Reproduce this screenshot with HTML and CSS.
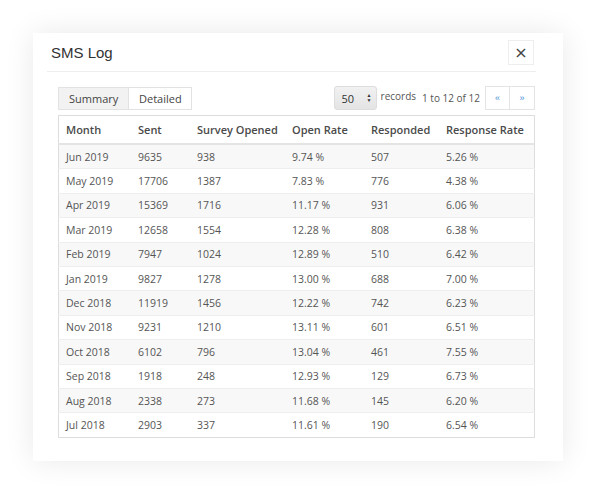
FILE: index.html
```html
<!DOCTYPE html>
<html lang="en">
<head>
    <meta charset="UTF-8">
    <title>SMS Log</title>
    <link rel="stylesheet" href="styles.css">
</head>
<body>
    <div class="modal">
        <div class="modal-header">
            <h3>SMS Log</h3>
            <button class="close">&times;</button>
        </div>
        <div class="modal-body">
            <div class="toolbar">
                <div class="tabs">
                    <button class="active">Summary</button>
                    <button>Detailed</button>
                </div>
                <div class="paging">
                    <div class="select">50 <span class="arrows">&#9650;<br>&#9660;</span></div>
                    <span class="records">records</span>
                    <span class="count">1 to 12 of 12</span>
                    <div class="pager">
                        <button>&laquo;</button>
                        <button>&raquo;</button>
                    </div>
                </div>
            </div>
            <table class="log">
                <thead>
                    <tr><th class="c1">Month</th><th class="c2">Sent</th><th class="c3">Survey Opened</th><th class="c4">Open Rate</th><th class="c5">Responded</th><th>Response Rate</th></tr>
                </thead>
                <tbody>
                    <tr><td>Jun 2019</td><td>9635</td><td>938</td><td>9.74 %</td><td>507</td><td>5.26 %</td></tr>
                    <tr><td>May 2019</td><td>17706</td><td>1387</td><td>7.83 %</td><td>776</td><td>4.38 %</td></tr>
                    <tr><td>Apr 2019</td><td>15369</td><td>1716</td><td>11.17 %</td><td>931</td><td>6.06 %</td></tr>
                    <tr><td>Mar 2019</td><td>12658</td><td>1554</td><td>12.28 %</td><td>808</td><td>6.38 %</td></tr>
                    <tr><td>Feb 2019</td><td>7947</td><td>1024</td><td>12.89 %</td><td>510</td><td>6.42 %</td></tr>
                    <tr><td>Jan 2019</td><td>9827</td><td>1278</td><td>13.00 %</td><td>688</td><td>7.00 %</td></tr>
                    <tr><td>Dec 2018</td><td>11919</td><td>1456</td><td>12.22 %</td><td>742</td><td>6.23 %</td></tr>
                    <tr><td>Nov 2018</td><td>9231</td><td>1210</td><td>13.11 %</td><td>601</td><td>6.51 %</td></tr>
                    <tr><td>Oct 2018</td><td>6102</td><td>796</td><td>13.04 %</td><td>461</td><td>7.55 %</td></tr>
                    <tr><td>Sep 2018</td><td>1918</td><td>248</td><td>12.93 %</td><td>129</td><td>6.73 %</td></tr>
                    <tr><td>Aug 2018</td><td>2338</td><td>273</td><td>11.68 %</td><td>145</td><td>6.20 %</td></tr>
                    <tr><td>Jul 2018</td><td>2903</td><td>337</td><td>11.61 %</td><td>190</td><td>6.54 %</td></tr>
                </tbody>
            </table>
        </div>
    </div>
</body>
</html>
```

FILE: styles.css
```css
body {
    margin: 0;
    background-color: #fff;
    font-family: "Open Sans", sans-serif;
    color: #555;
}
.modal {
    width: 530px;
    height: 428px;
    margin: 33px;
    background-color: #fff;
    box-shadow: 0 0 28px rgba(0,0,0,0.09);
}
.modal-header {
    display: flex;
    justify-content: space-between;
    align-items: center;
    height: 38px;
    margin: 0 27px 0 14px;
    padding: 0 2px 0 4px;
    border-bottom: 1px solid #eee;
}
.modal-header h3 {
    margin: 0;
    font-family: "Liberation Sans", Arial, sans-serif;
    font-weight: normal;
    font-size: 15px;
    color: #333;
}
.close {
    width: 26px;
    height: 25px;
    margin-top: 1px;
    padding: 0;
    background: #fff;
    border: 1px solid #eee;
    font-family: "DejaVu Sans", sans-serif;
    font-size: 16px;
    line-height: 20px;
    color: #444;
}
.modal-body {
    padding: 14px 28px 0 25px;
}
.toolbar {
    display: flex;
    justify-content: space-between;
    align-items: center;
    margin-bottom: 5px;
}
.tabs {
    display: flex;
    margin-top: 1px;
}
.tabs button {
    height: 23px;
    padding: 0 10px;
    background: #fff;
    border: 1px solid #e2e2e2;
    font-family: "Open Sans", sans-serif;
    font-size: 11px;
    color: #444;
}
.tabs button + button {
    border-left: none;
}
.tabs button.active {
    background: #f2f2f2;
    width: 71px;
}
.tabs button:last-child {
    width: 63px;
}
.paging {
    display: flex;
    align-items: center;
    font-size: 10px;
    color: #555;
}
.select {
    display: flex;
    justify-content: space-between;
    align-items: center;
    box-sizing: border-box;
    width: 43px;
    height: 24px;
    padding: 0 4px 0 7px;
    background: linear-gradient(#f1f1f1, #e4e4e4);
    border: 1px solid #ddd;
    border-radius: 3px;
    font-size: 11px;
    color: #333;
}
.arrows {
    font-size: 5px;
    line-height: 5px;
    color: #333;
}
.records {
    margin: -4px 0 0 4px;
}
.count {
    margin-left: 6px;
    font-size: 10px;
}
.pager {
    display: flex;
    margin-left: 5px;
}
.pager button {
    width: 25px;
    height: 24px;
    padding: 0;
    background: #fff;
    border: 1px solid #e4e4e4;
    color: #4a90d9;
    font-size: 9px;
}
.pager button + button {
    border-left: none;
}
.log {
    width: 477px;
    border-collapse: collapse;
    border: 1px solid #ddd;
    font-size: 10.5px;
}
.log th {
    height: 27px;
    padding: 0 7px;
    text-align: left;
    font-weight: 600;
    font-size: 11px;
    color: #4a4a4a;
    border-bottom: 2px solid #e4e4e4;
}
.log td {
    height: 23.4px;
    padding: 0 7px;
    color: #555;
    border-top: 1px solid #eee;
}
.log tbody tr:nth-child(odd) {
    background-color: #f8f8f8;
}
.c1 { width: 58px; }
.c2 { width: 45px; }
.c3 { width: 81px; }
.c4 { width: 65px; }
.c5 { width: 61px; }
```
